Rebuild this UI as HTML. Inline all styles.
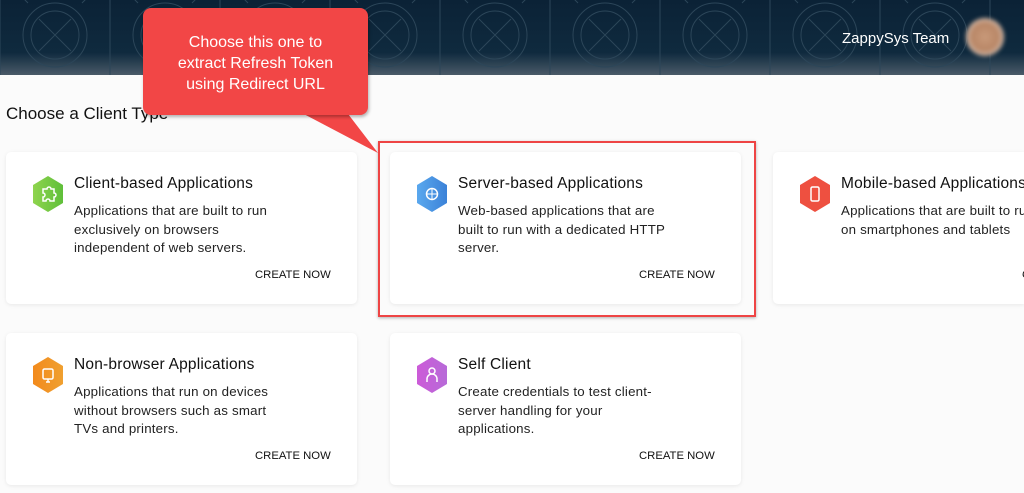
<!DOCTYPE html>
<html><head><meta charset="utf-8"><style>
*{margin:0;padding:0;box-sizing:border-box}
html,body{width:1024px;height:493px;overflow:hidden}
body{background:#fbfbfb;font-family:"Liberation Sans",sans-serif;position:relative}
.hdr{position:absolute;left:0;top:0;width:1024px;height:75px;background:linear-gradient(#0b2236 0%,#0f2a3e 70%,#4a5a68 100%);overflow:hidden}
.user{position:absolute;left:842px;top:30px;color:#fff;font-size:15px}
.av{position:absolute;left:966px;top:18px;width:38px;height:38px;border-radius:50%;background:radial-gradient(#c99a7a,#b88666 50%,#e8dcd3 80%);filter:blur(2px)}
h2{position:absolute;left:6px;top:104px;font-size:17px;font-weight:normal;color:#111}
.card{position:absolute;width:351px;height:152px;background:#fff;border-radius:5px;box-shadow:0 1px 4px rgba(0,0,0,.08);overflow:hidden}
.ic{position:absolute;left:25px;top:23px}
.t{position:absolute;left:68px;top:23px;font-size:15.5px;color:#111;white-space:nowrap;letter-spacing:.2px}
.d{position:absolute;left:68px;top:50px;font-size:13.3px;line-height:18.5px;color:#222;white-space:nowrap;letter-spacing:.2px}
.c{position:absolute;left:249px;top:117px;font-size:11.3px;color:#111;white-space:nowrap}
.hl{position:absolute;left:378px;top:141px;width:378px;height:176px;border:2px solid #ee4444;box-shadow:0 1px 3px rgba(0,0,0,.3)}
.co{position:absolute;left:143px;top:8px;width:225px;height:107px;background:#f24646;border-radius:8px;box-shadow:1px 2px 3px rgba(0,0,0,.3);color:#fff;font-size:16px;text-align:center;line-height:21px;padding-top:24px}
</style></head><body>
<div class="hdr">
<svg width="1024" height="75" style="position:absolute;left:0;top:0" fill="none" stroke="#2c4659" stroke-width="1">
<g id="p"><circle cx="55" cy="35" r="32"/><circle cx="55" cy="35" r="24"/><path d="M39 19L71 51M71 19L39 51"/><path d="M0 0V75M110 0V75"/><path d="M20 -5l8 8M90 -5l-8 8"/></g>
<use href="#p" x="110"/><use href="#p" x="220"/><use href="#p" x="330"/><use href="#p" x="440"/><use href="#p" x="550"/><use href="#p" x="660"/><use href="#p" x="770"/><use href="#p" x="880"/>
</svg>
<div class="user">ZappySys Team</div><div class="av"></div>
</div>
<h2>Choose a Client Type</h2>

<div class="card" style="left:6px;top:152px">
<svg class="ic" width="34" height="38" viewBox="0 0 34 38"><defs><linearGradient id="g1" x1="0" x2="1"><stop offset="0" stop-color="#8fd44e"/><stop offset="1" stop-color="#5fbf3a"/></linearGradient></defs><path d="M17 1L32 10V28L17 37L2 28V10Z" fill="url(#g1)"/><path d="M12 14h4a2 2 0 1 1 4 0h3v4a2 2 0 1 1 0 4v4h-4a2 2 0 1 0-4 0h-3v-4a2 2 0 1 0 0-4z" fill="none" stroke="#fff" stroke-width="1.5"/></svg>
<div class="t">Client-based Applications</div>
<div class="d">Applications that are built to run<br>exclusively on browsers<br>independent of web servers.</div>
<div class="c">CREATE NOW</div></div>

<div class="card" style="left:390px;top:152px">
<svg class="ic" width="34" height="38" viewBox="0 0 34 38"><defs><linearGradient id="g2" x1="0" x2="1"><stop offset="0" stop-color="#5aa8ee"/><stop offset="1" stop-color="#3b82d8"/></linearGradient></defs><path d="M17 1L32 10V28L17 37L2 28V10Z" fill="url(#g2)"/><circle cx="17" cy="19" r="5.5" fill="none" stroke="#fff" stroke-width="1.5"/><path d="M11.5 19h11M17 13.5v11" stroke="#fff" stroke-width="1"/></svg>
<div class="t">Server-based Applications</div>
<div class="d">Web-based applications that are<br>built to run with a dedicated HTTP<br>server.</div>
<div class="c">CREATE NOW</div></div>

<div class="card" style="left:773px;top:152px;width:251px;border-radius:5px 0 0 5px">
<svg class="ic" width="34" height="38" viewBox="0 0 34 38"><path d="M17 1L32 10V28L17 37L2 28V10Z" fill="#ee5040"/><rect x="13" y="12" width="8" height="14" rx="1.5" fill="none" stroke="#fff" stroke-width="1.5"/></svg>
<div class="t">Mobile-based Applications</div>
<div class="d">Applications that are built to run<br>on smartphones and tablets</div>
<div class="c">CREATE NOW</div></div>

<div class="card" style="left:6px;top:333px">
<svg class="ic" width="34" height="38" viewBox="0 0 34 38"><defs><linearGradient id="g3" x1="0" x2="1"><stop offset="0" stop-color="#f28a1c"/><stop offset="1" stop-color="#f0a030"/></linearGradient></defs><path d="M17 1L32 10V28L17 37L2 28V10Z" fill="url(#g3)"/><rect x="12" y="13" width="10" height="10" rx="1.5" fill="none" stroke="#fff" stroke-width="1.5"/><path d="M15 26h4M17 23v3" stroke="#fff" stroke-width="1.5"/></svg>
<div class="t">Non-browser Applications</div>
<div class="d">Applications that run on devices<br>without browsers such as smart<br>TVs and printers.</div>
<div class="c">CREATE NOW</div></div>

<div class="card" style="left:390px;top:333px">
<svg class="ic" width="34" height="38" viewBox="0 0 34 38"><defs><linearGradient id="g4" x1="0" x2="1"><stop offset="0" stop-color="#cc5bd8"/><stop offset="1" stop-color="#b76ad8"/></linearGradient></defs><path d="M17 1L32 10V28L17 37L2 28V10Z" fill="url(#g4)"/><circle cx="17" cy="15" r="3" fill="none" stroke="#fff" stroke-width="1.5"/><path d="M12 26v-3a5 5 0 0 1 10 0v3" fill="none" stroke="#fff" stroke-width="1.5"/></svg>
<div class="t">Self Client</div>
<div class="d">Create credentials to test client-<br>server handling for your<br>applications.</div>
<div class="c">CREATE NOW</div></div>

<div class="hl"></div>
<svg width="1024" height="493" style="position:absolute;left:0;top:0"><path d="M300 112L378 153L345 110Z" fill="#f24646"/></svg>
<div class="co">Choose this one to<br>extract Refresh Token<br>using Redirect URL</div>
</body></html>
